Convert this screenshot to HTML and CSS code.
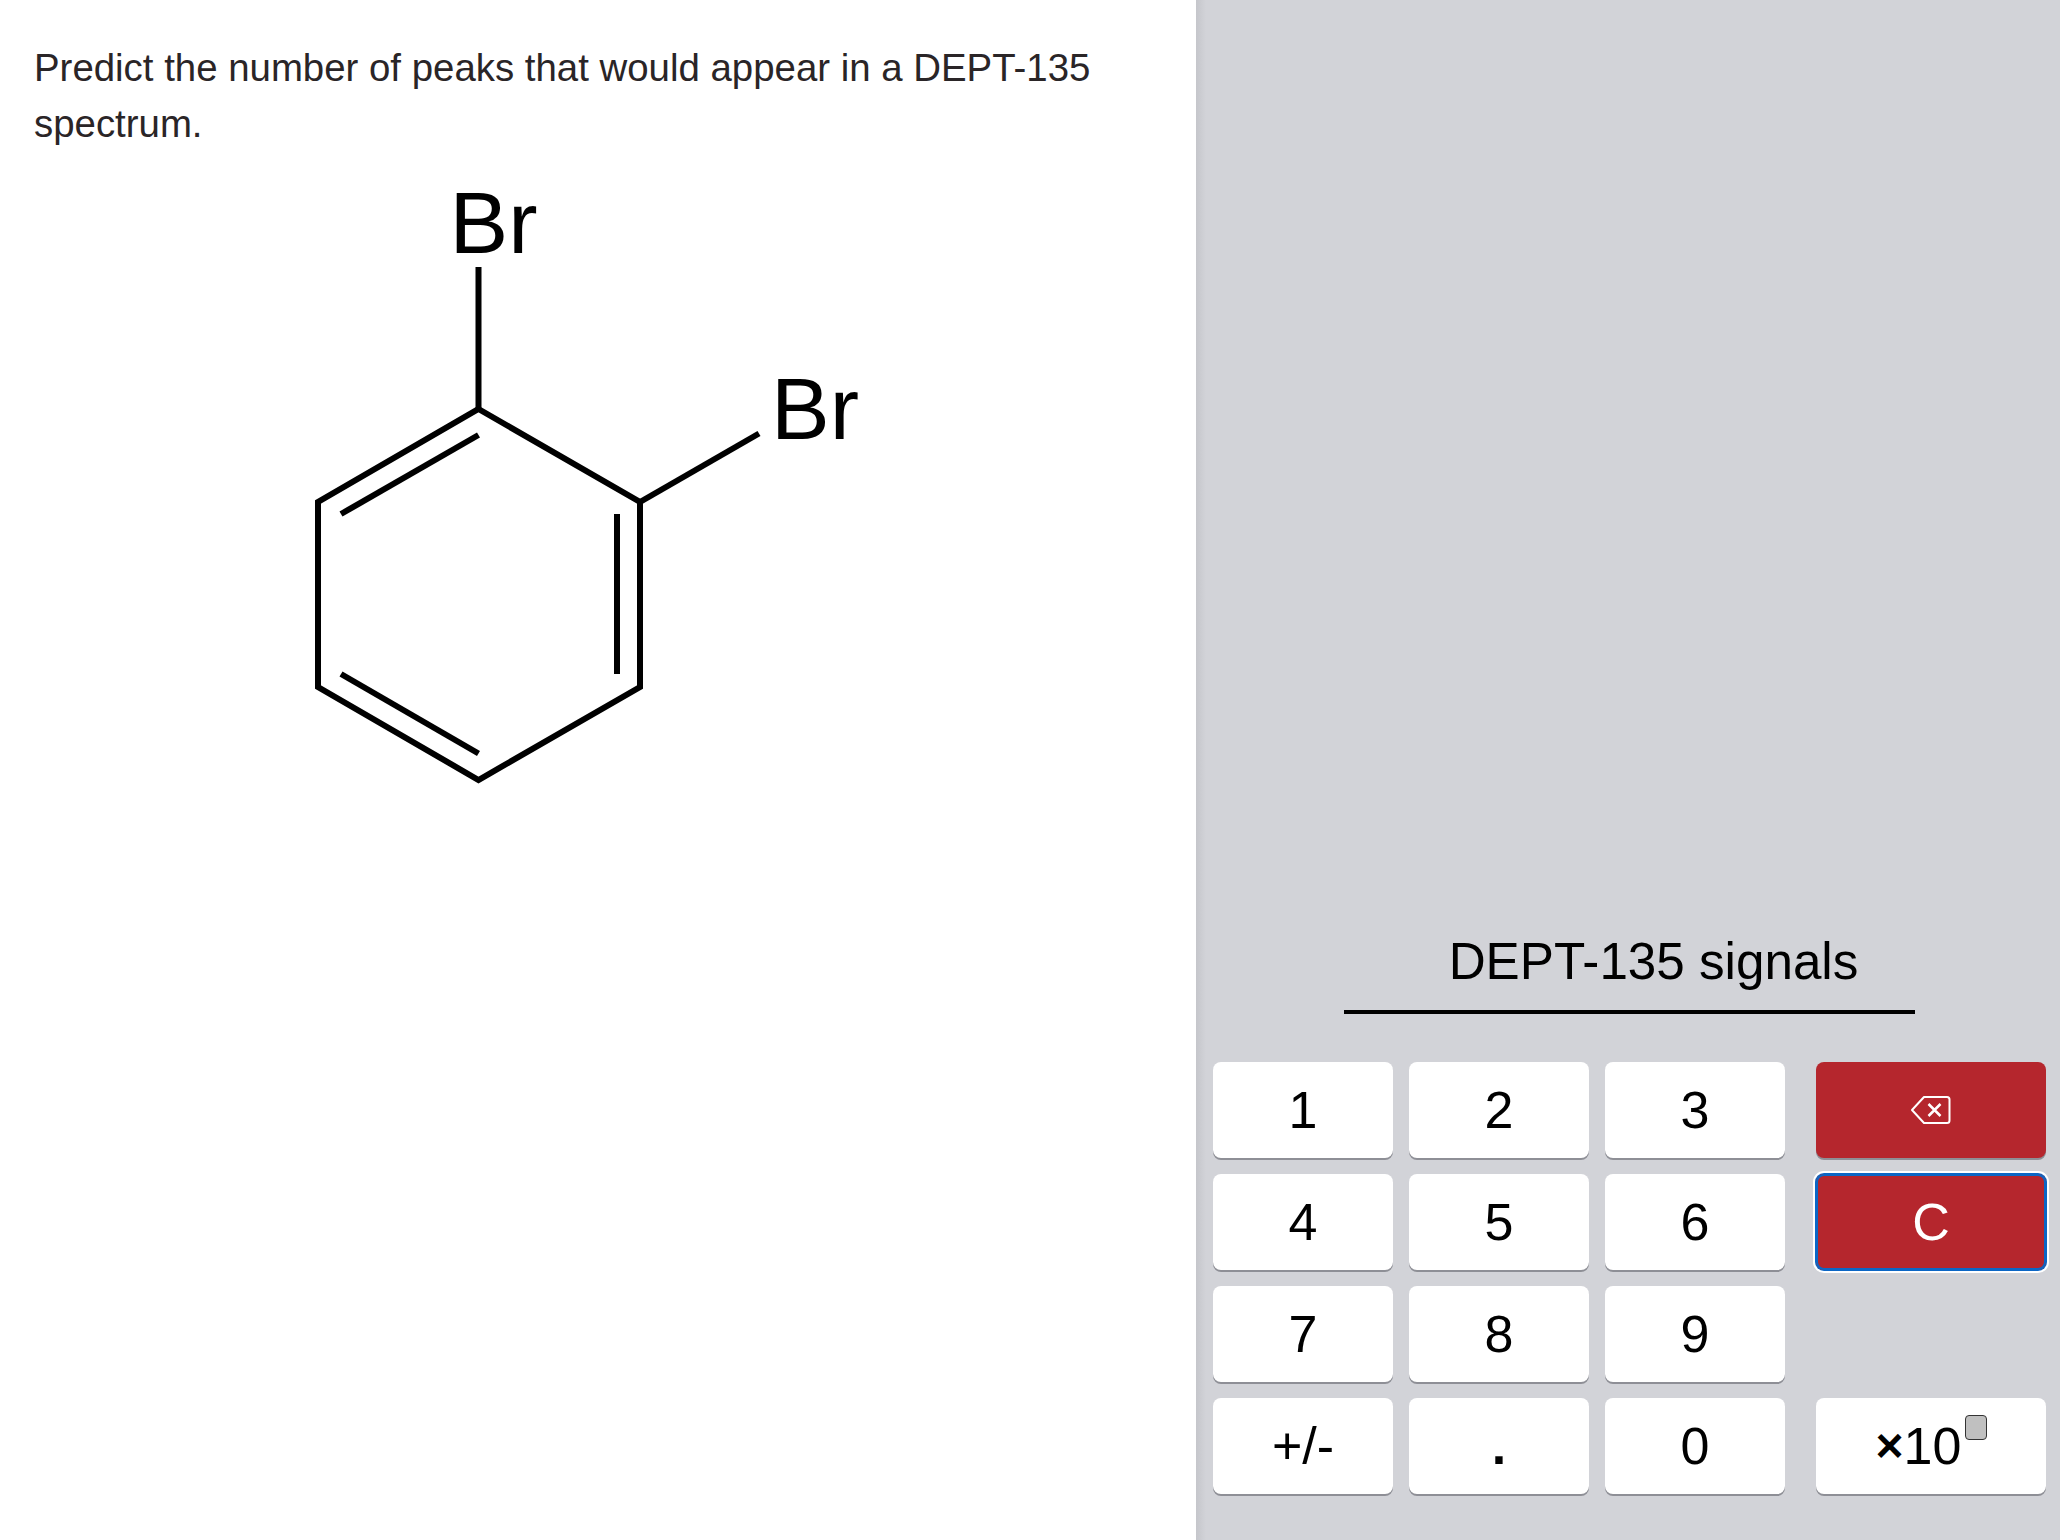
FILE: index.html
```html
<!DOCTYPE html>
<html lang="en">
<head>
<meta charset="utf-8">
<title>DEPT-135 signals</title>
<link rel="stylesheet" href="styles.css">
</head>
<body>
<main class="app">
  <section class="question">
    <p class="prompt">Predict the number of peaks that would appear in a DEPT-135 spectrum.</p>
    <svg class="molecule" width="640" height="660" viewBox="280 160 640 660" role="img" aria-label="1,2-dibromobenzene">
      <g class="bonds">
        <path d="M478.5 408 L640 501 V686 L478.5 779 L318 686 V501 Z"/>
        <path d="M478.5 266 V408"/>
        <path d="M640 501 L759 432.5"/>
        <path d="M617 513 V673"/>
        <path d="M341 513 L478.5 434"/>
        <path d="M341 673 L478.5 752.5"/>
      </g>
      <text class="atom" x="449.5" y="252">Br</text>
      <text class="atom" x="771" y="438">Br</text>
    </svg>
  </section>
  <section class="panel">
    <div class="answer"><span class="answer-label">DEPT-135 signals</span></div>
    <div class="keypad">
      <div class="digits">
        <button class="key">1</button><button class="key">2</button><button class="key">3</button>
        <button class="key">4</button><button class="key">5</button><button class="key">6</button>
        <button class="key">7</button><button class="key">8</button><button class="key">9</button>
        <button class="key">+/-</button><button class="key key-dot">.</button><button class="key">0</button>
      </div>
      <div class="actions">
        <button class="key key-red" aria-label="Backspace">
          <svg class="backspace" width="42" height="32" viewBox="0 0 42 32">
            <path d="M2 16 L14 3 H37 Q39.500 3 39.500 5.500 V26.500 Q39.500 29 37 29 H14 Z"/>
            <path class="backspace-x" d="M18.500 10 L30.500 22 M30.500 10 L18.500 22"/>
          </svg>
        </button>
        <button class="key key-red key-focus">C</button>
        <span class="spacer"></span>
        <button class="key key-power"><span class="times">×</span>10<span class="slot"></span></button>
      </div>
    </div>
  </section>
</main>
</body>
</html>
```

FILE: styles.css
```css
* { box-sizing: border-box; }
html, body { margin: 0; height: 100%; }
body {
  background: #fff;
  font-family: "Liberation Sans", Arial, sans-serif;
  color: #000;
}
.app { display: flex; width: 2060px; height: 1540px; overflow: hidden; }
.question { width: 1196px; flex: none; padding: 40px 34px 0; }
.prompt {
  margin: 0;
  font-size: 38.400px;
  line-height: 56px;
  color: #2a2527;
  width: 1100px;
}
.molecule { display: block; margin: 9px 0 0 246px; }
.bonds path { fill: none; stroke: #000; stroke-width: 6; stroke-linejoin: miter; }
.atom { font-size: 88px; fill: #000; font-family: "Liberation Sans", Arial, sans-serif; }
.panel {
  flex: 1;
  display: flex;
  flex-direction: column;
  justify-content: flex-end;
  padding: 0 14px 46px 17px;
  background: linear-gradient(90deg, #c5c6cb 0, #d2d3d8 10px);
}
.answer {
  width: 571px;
  margin: 0 0 48px 131px;
  padding: 0 0 16px 48px;
  border-bottom: 4px solid #000;
  text-align: center;
  font-size: 51.200px;
  line-height: 64px;
}
.keypad { display: flex; gap: 31px; }
.digits { display: grid; grid-template-columns: repeat(3, 180px); grid-auto-rows: 96px; gap: 16px; }
.actions { display: grid; grid-template-columns: 230px; grid-auto-rows: 96px; gap: 16px; }
.key {
  display: flex;
  align-items: center;
  justify-content: center;
  padding: 0;
  border: 0;
  border-radius: 8px;
  background: #fff;
  color: #000;
  font: 52px/1 "Liberation Sans", Arial, sans-serif;
  box-shadow: 0 2px 0 #8e8f96;
}
.key-dot { font-weight: 700; }
.key-red { background: #b5262d; color: #fff; }
.key-focus { box-shadow: inset 0 0 0 2px #0b66c5, 0 0 0 1px #0b66c5, 0 0 0 3px #fff; }
.backspace { fill: none; stroke: #fff; stroke-width: 2; stroke-linejoin: round; }
.backspace-x { stroke-width: 2.500; }
.times { font-weight: 700; margin-left: 3px; font-size: 48px; }
.slot {
  width: 22px;
  height: 25px;
  margin: -38px 2px 0 4px;
  background: #c0c0c0;
  border: 1.500px solid #333;
  border-radius: 4px;
}
```
